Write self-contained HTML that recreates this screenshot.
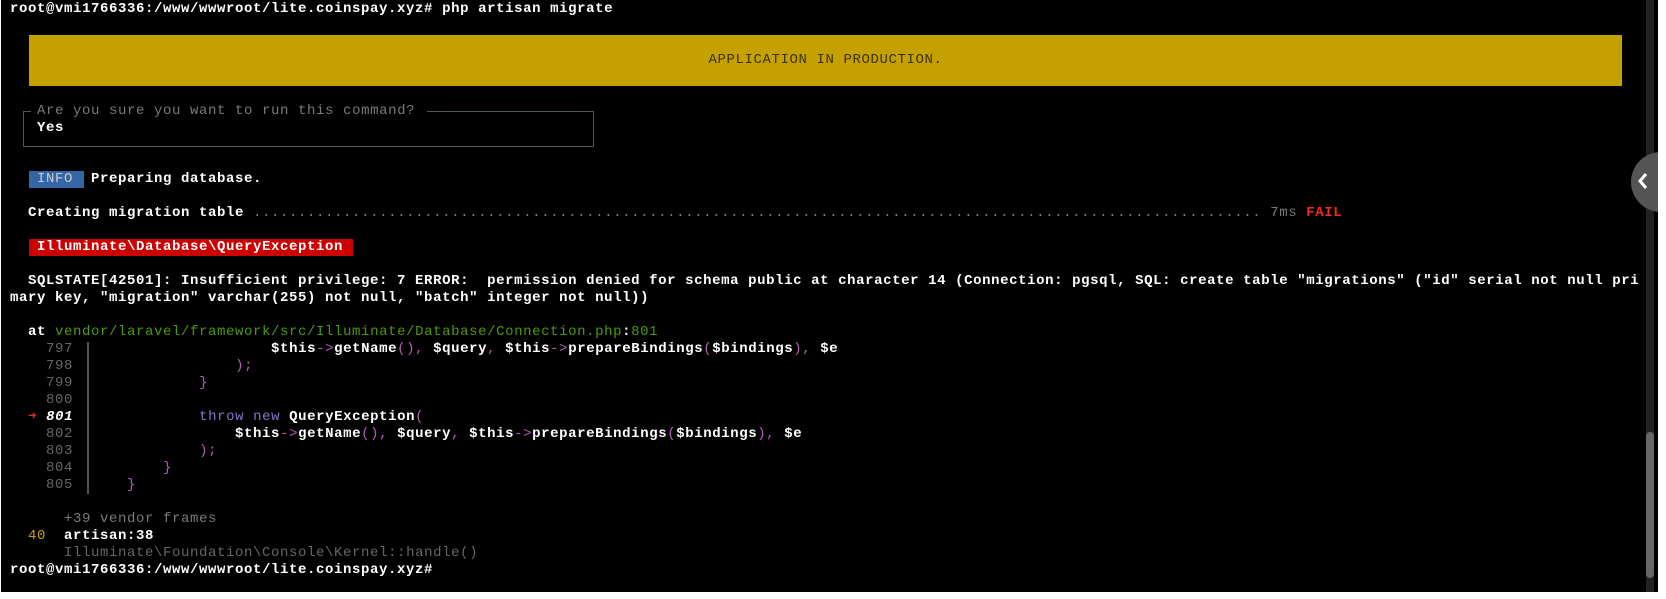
<!DOCTYPE html>
<html><head><meta charset="utf-8"><style>
html,body{margin:0;padding:0;background:#fff;width:1666px;height:599px;overflow:hidden}
#t{position:absolute;left:1px;top:0;width:1657px;height:592px;background:#000;overflow:hidden}
pre{position:absolute;left:9px;top:1px;margin:0;font:14px/17px "Liberation Mono",monospace;letter-spacing:0.6px;color:#fff;font-weight:bold;white-space:pre}
.g{color:#7a7a7a;font-weight:normal}
.n{color:#666;font-weight:normal}
.gr{color:#4e9a06;font-weight:normal}
.p{color:#b45fb4;font-weight:normal}
.k{color:#8a72c8;font-weight:normal}
.r{color:#ef2929}
.y{color:#c4a000;font-weight:normal}
.box{position:absolute}
</style></head><body>
<div id="t">
<div class="box" style="left:28px;top:35px;width:1593px;height:51px;background:#c4a000"></div>
<div class="box" style="left:28px;top:35px;width:1593px;height:51px;font:14px/51px 'Liberation Mono',monospace;letter-spacing:0.6px;color:#3b3200;text-align:center">APPLICATION IN PRODUCTION.</div>
<div class="box" style="left:22px;top:111px;width:569px;height:34px;border:1px solid #4a5a50"></div>
<div class="box" style="left:30px;top:105px;width:396px;height:12px;background:#000"></div>
<div class="box" style="left:28px;top:171px;width:55px;height:17px;background:#3465a4"></div>
<div class="box" style="left:28px;top:239px;width:324px;height:17px;background:#cc0000"></div>
<div class="box" style="left:86px;top:342px;width:2px;height:152px;background:#555"></div>
<pre>root@vmi1766336:/www/wwwroot/lite.coinspay.xyz# php artisan migrate



   

   <span class="g">Are you sure you want to run this command?</span>
   Yes


   <span style="color:#ccc;font-weight:normal">INFO</span>  Preparing database.

  Creating migration table <span class="g">................................................................................................................</span> <span class="g">7ms</span> <span class="r">FAIL</span>

   Illuminate\Database\QueryException

  SQLSTATE[42501]: Insufficient privilege: 7 ERROR:  permission denied for schema public at character 14 (Connection: pgsql, SQL: create table "migrations" ("id" serial not null pri
mary key, "migration" varchar(255) not null, "batch" integer not null))

  at <span class="gr">vendor/laravel/framework/src/Illuminate/Database/Connection.php</span>:<span class="gr">801</span>
    <span class="n">797</span>                      $this<span class="p">-&gt;</span>getName<span class="p">(),</span> $query<span class="p">,</span> $this<span class="p">-&gt;</span>prepareBindings<span class="p">(</span>$bindings<span class="p">),</span> $e
    <span class="n">798</span>                  <span class="p">);</span>
    <span class="n">799</span>              <span class="p">}</span>
    <span class="n">800</span>
  <span class="r">➜</span> <i>801</i>              <span class="k">throw new</span> QueryException<span class="p">(</span>
    <span class="n">802</span>                  $this<span class="p">-&gt;</span>getName<span class="p">(),</span> $query<span class="p">,</span> $this<span class="p">-&gt;</span>prepareBindings<span class="p">(</span>$bindings<span class="p">),</span> $e
    <span class="n">803</span>              <span class="p">);</span>
    <span class="n">804</span>          <span class="p">}</span>
    <span class="n">805</span>      <span class="p">}</span>

      <span class="g">+39 vendor frames</span>
  <span class="y">40</span>  artisan:38
      <span class="n">Illuminate\Foundation\Console\Kernel::handle()</span>
root@vmi1766336:/www/wwwroot/lite.coinspay.xyz#</pre>
<div class="box" style="left:1645px;top:0;width:8px;height:592px;background:#222"></div>
<div class="box" style="left:1645px;top:432px;width:8px;height:146px;background:#666;border-radius:4px"></div>
<div class="box" style="left:1630px;top:152px;width:40px;height:60px;background:#555;border-radius:30px 0 0 30px"></div>
<svg class="box" style="left:1635px;top:170px" width="14" height="22" viewBox="0 0 14 22"><path d="M10 4 L4 11 L10 18" stroke="#fff" stroke-width="3" fill="none"/></svg>
</div>
</body></html>
